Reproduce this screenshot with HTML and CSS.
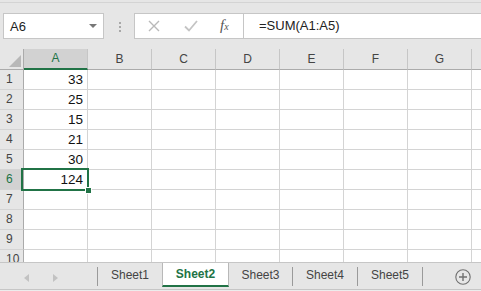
FILE: index.html
```html
<!DOCTYPE html>
<html lang="en">

<head>
  <meta charset="UTF-8" />
  <meta name="viewport" content="width=device-width, initial-scale=1.0" />
  <title>Book1 - Excel</title>
  <link rel="stylesheet" href="styles.css">
</head>

<body>
  <div class="excel">
    <!-- Name box + formula bar -->
    <div class="formula-bar">
      <div class="name-box">
        <span>A6</span>
        <svg class="caret" width="8" height="4" viewBox="0 0 8 4"><polygon points="0,0 8,0 4,4" /></svg>
      </div>
      <div class="grip"><i></i><i></i><i></i></div>
      <div class="fx-box">
        <svg class="icon" width="12" height="12" viewBox="0 0 12 12">
          <path d="M1 1 L11 11 M11 1 L1 11" stroke="#b9b9b9" stroke-width="1.4" fill="none" />
        </svg>
        <svg class="icon" width="14" height="12" viewBox="0 0 14 12">
          <path d="M1 6.5 L5 10.5 L13 1" stroke="#c4c4c4" stroke-width="1.8" fill="none" />
        </svg>
        <span class="fx">f<sub>x</sub></span>
      </div>
      <div class="formula-input">=SUM(A1:A5)</div>
    </div>

    <!-- Worksheet grid -->
    <div class="sheet">
      <div class="grid">
        <div class="corner">
          <svg width="12" height="12" viewBox="0 0 12 12"><polygon points="12,0 12,12 0,12" fill="#b8b8b8" /></svg>
        </div>
        <div class="col-head selected">A</div>
        <div class="col-head">B</div>
        <div class="col-head">C</div>
        <div class="col-head">D</div>
        <div class="col-head">E</div>
        <div class="col-head">F</div>
        <div class="col-head">G</div>
        <div class="col-head"></div>

        <div class="row-head">1</div>
        <div class="cell num">33</div><div class="cell"></div><div class="cell"></div><div class="cell"></div>
        <div class="cell"></div><div class="cell"></div><div class="cell"></div><div class="cell"></div>

        <div class="row-head">2</div>
        <div class="cell num">25</div><div class="cell"></div><div class="cell"></div><div class="cell"></div>
        <div class="cell"></div><div class="cell"></div><div class="cell"></div><div class="cell"></div>

        <div class="row-head">3</div>
        <div class="cell num">15</div><div class="cell"></div><div class="cell"></div><div class="cell"></div>
        <div class="cell"></div><div class="cell"></div><div class="cell"></div><div class="cell"></div>

        <div class="row-head">4</div>
        <div class="cell num">21</div><div class="cell"></div><div class="cell"></div><div class="cell"></div>
        <div class="cell"></div><div class="cell"></div><div class="cell"></div><div class="cell"></div>

        <div class="row-head">5</div>
        <div class="cell num">30</div><div class="cell"></div><div class="cell"></div><div class="cell"></div>
        <div class="cell"></div><div class="cell"></div><div class="cell"></div><div class="cell"></div>

        <div class="row-head selected">6</div>
        <div class="cell num active">124<span class="selection"><span class="handle"></span></span></div>
        <div class="cell"></div><div class="cell"></div><div class="cell"></div>
        <div class="cell"></div><div class="cell"></div><div class="cell"></div><div class="cell"></div>

        <div class="row-head">7</div>
        <div class="cell"></div><div class="cell"></div><div class="cell"></div><div class="cell"></div>
        <div class="cell"></div><div class="cell"></div><div class="cell"></div><div class="cell"></div>

        <div class="row-head">8</div>
        <div class="cell"></div><div class="cell"></div><div class="cell"></div><div class="cell"></div>
        <div class="cell"></div><div class="cell"></div><div class="cell"></div><div class="cell"></div>

        <div class="row-head">9</div>
        <div class="cell"></div><div class="cell"></div><div class="cell"></div><div class="cell"></div>
        <div class="cell"></div><div class="cell"></div><div class="cell"></div><div class="cell"></div>

        <div class="row-head">10</div>
        <div class="cell"></div><div class="cell"></div><div class="cell"></div><div class="cell"></div>
        <div class="cell"></div><div class="cell"></div><div class="cell"></div><div class="cell"></div>
      </div>
    </div>

    <!-- Sheet tabs -->
    <div class="tabs">
      <div class="tab-nav">
        <svg width="5" height="8" viewBox="0 0 5 8"><polygon points="5,0 5,8 0,4" /></svg>
        <svg width="5" height="8" viewBox="0 0 5 8"><polygon points="0,0 0,8 5,4" /></svg>
      </div>
      <span class="sep"></span>
      <div class="tab">Sheet1</div>
      <div class="tab active">Sheet2</div>
      <div class="tab">Sheet3</div>
      <span class="sep"></span>
      <div class="tab">Sheet4</div>
      <span class="sep"></span>
      <div class="tab">Sheet5</div>
      <span class="sep"></span>
      <div class="add-sheet">
        <svg width="16" height="16" viewBox="0 0 16 16">
          <circle cx="8" cy="8" r="7.2" stroke="#707070" stroke-width="1.1" fill="none" />
          <path d="M8 4 V12 M4 8 H12" stroke="#707070" stroke-width="1.4" fill="none" />
        </svg>
      </div>
    </div>
    <div class="status"></div>
  </div>
</body>

</html>
```

FILE: styles.css
```css
* {
  box-sizing: border-box;
}

body {
  margin: 0;
  font-family: "Liberation Sans", Arial, sans-serif;
  background: #e6e6e6;
}

.excel {
  width: 481px;
  height: 291px;
  overflow: hidden;
  display: flex;
  flex-direction: column;
  background: #e6e6e6;
}

/* Formula bar */
.formula-bar {
  margin-top: 2px;
  border-top: 1px solid #d4d4d4;
  padding: 10px 0 9px 3px;
  display: flex;
  height: 47px;
}

.name-box {
  width: 101px;
  height: 26px;
  background: #fff;
  border: 1px solid #c6c6c6;
  display: flex;
  align-items: center;
  justify-content: space-between;
  padding: 0 6px 0 6px;
  font-size: 13px;
  color: #222;
}

.caret {
  fill: #777;
}

.grip {
  width: 30px;
  display: flex;
  flex-direction: column;
  align-items: center;
  justify-content: center;
  gap: 2px;
  padding-left: 1px;
}

.grip i {
  display: block;
  width: 2px;
  height: 2px;
  background: #a8a8a8;
}

.fx-box {
  width: 109px;
  height: 26px;
  background: #fff;
  border: 1px solid #c6c6c6;
  border-right: none;
  display: flex;
  align-items: center;
  padding-left: 13px;
}

.fx-box .icon {
  margin-right: 24px;
}

.fx-box .icon + .icon {
  margin-right: 22px;
}

.fx {
  font-family: "Liberation Serif", "Times New Roman", serif;
  font-style: italic;
  font-size: 15px;
  color: #555;
  margin-top: -2px;
}

.fx sub {
  font-size: 10px;
  vertical-align: 0;
}

.formula-input {
  flex: 1;
  height: 26px;
  background: #fff;
  border: 1px solid #c6c6c6;
  border-right: none;
  font-size: 13px;
  color: #222;
  line-height: 24px;
  padding-left: 15px;
}

/* Worksheet */
.sheet {
  height: 213px;
  overflow: hidden;
}

.grid {
  display: grid;
  grid-template-columns: 24px repeat(8, 64px);
  grid-template-rows: 21px;
  grid-auto-rows: 20px;
}

.corner,
.col-head,
.row-head {
  background: #e6e6e6;
  color: #444;
  font-size: 12px;
  border-right: 1px solid #c6c6c6;
  border-bottom: 1px solid #ababab;
}

.corner {
  display: flex;
  align-items: flex-end;
  justify-content: flex-end;
  padding: 0 2px 2px 0;
  border-right-color: #ababab;
}

.col-head {
  text-align: center;
  line-height: 20px;
}

.row-head {
  border-right-color: #ababab;
  border-bottom-color: #d4d4d4;
  line-height: 19px;
  padding-left: 6px;
}

.col-head.selected,
.row-head.selected {
  background: #d2d2d2;
  color: #217346;
}

.col-head.selected {
  border-bottom: 2px solid #217346;
  line-height: 19px;
}

.cell {
  background: #fff;
  border-right: 1px solid #d4d4d4;
  border-bottom: 1px solid #d4d4d4;
  font-size: 13.5px;
  color: #111;
  line-height: 19px;
}

.num {
  text-align: right;
  padding-right: 4px;
}

.cell.active {
  position: relative;
}

.selection {
  position: absolute;
  left: -3px;
  top: -2px;
  width: 68px;
  height: 23px;
  border: 2px solid #217346;
  z-index: 1;
}

.handle {
  position: absolute;
  right: -5px;
  bottom: -5px;
  width: 7px;
  height: 7px;
  background: #217346;
  border: 1px solid #fff;
}

/* Sheet tabs */
.tabs {
  height: 28px;
  border-top: 1px solid #c6c6c6;
  border-bottom: 1px solid #c6c6c6;
  display: flex;
  align-items: center;
  font-size: 12px;
  color: #444;
}

.tab-nav {
  width: 97px;
  display: flex;
  align-items: center;
  gap: 24px;
  padding-left: 24px;
  padding-top: 3px;
  fill: #c2c2c2;
}

.sep {
  width: 1px;
  height: 19px;
  background: #9a9a9a;
}

.tab {
  width: 64px;
  text-align: center;
  line-height: 24px;
  align-self: flex-start;
}

.tab.active {
  width: 67px;
  height: 24px;
  background: #fff;
  color: #217346;
  font-weight: bold;
  border-left: 1px solid #b8b8b8;
  border-right: 1px solid #b8b8b8;
  border-bottom: 2px solid #217346;
  line-height: 22px;
}

.tab.active + .tab {
  width: 63px;
}

.add-sheet {
  flex: 1;
  display: flex;
  justify-content: flex-end;
  padding-right: 10px;
  padding-top: 1px;
}

.status {
  flex: 1;
  background: #ececec;
}
```
